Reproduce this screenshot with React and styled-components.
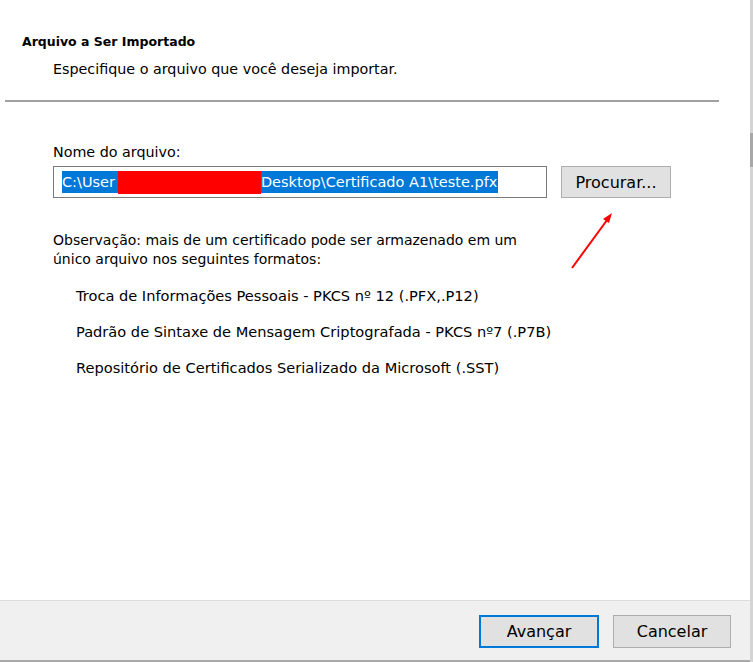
import React from 'react'
import styled, { createGlobalStyle } from 'styled-components'

const GlobalStyle = createGlobalStyle`
  html, body {
    margin: 0;
    padding: 0;
    background: #ffffff;
  }
  body {
    font-family: "DejaVu Sans", Tahoma, sans-serif;
    color: #000;
  }
`

const Window = styled.div`
  display: flex;
  width: 753px;
  height: 662px;
  overflow: hidden;
`

const Main = styled.div`
  flex: 1;
  display: flex;
  flex-direction: column;
  border-bottom: 2px solid #a9a9a9;
`

const ScrollStrip = styled.div`
  width: 3px;
  display: flex;
  flex-direction: column;
  background: #d4d4d4;
  padding-top: 133px;
`

const ScrollThumb = styled.div`
  height: 34px;
  background: #a8a8a8;
`

const Header = styled.div`
  padding: 34px 0 0 17px;
  margin: 0 31px 0 5px;
  height: 66px;
  border-bottom: 2px solid #a0a0a0;
`

const Title = styled.div`
  font-size: 12.5px;
  font-weight: bold;
  line-height: 16px;
`

const Subtitle = styled.div`
  font-size: 14.3px;
  line-height: 17px;
  margin-top: 11px;
  padding-left: 31px;
`

const Content = styled.div`
  flex: 1;
  padding: 42px 0 0 53px;
  font-size: 14px;
  line-height: 19px;
`

const Label = styled.div`
  line-height: 17px;
  font-size: 14.3px;
`

const FileRow = styled.div`
  display: flex;
  align-items: center;
  gap: 14px;
  margin-top: 5px;
`

const FileInput = styled.div`
  width: 484px;
  height: 30px;
  border: 1px solid #7a7a7a;
  display: flex;
  align-items: center;
  padding-left: 8px;
  overflow: hidden;
  white-space: nowrap;
`

const Selection = styled.span`
  display: flex;
  align-items: center;
  background: #0078d7;
  color: #ffffff;
  height: 22px;
  padding-right: 1px;
  font-size: 14.5px;
`

const Redaction = styled.span`
  display: inline-block;
  width: 143px;
  height: 23px;
  margin: 1px 0 0 3px;
  background: #ff0000;
`

const Button = styled.div`
  width: ${p => p.w}px;
  height: ${p => p.h}px;
  box-sizing: border-box;
  background: #e1e1e1;
  border: ${p => (p.primary ? '2px solid #0078d7' : '1px solid #adadad')};
  display: flex;
  align-items: center;
  justify-content: center;
  font-size: 16px;
  color: #000;
`

const Note = styled.div`
  margin-top: 33px;
  width: 476px;
`

const Formats = styled.div`
  display: flex;
  flex-direction: column;
  gap: 17px;
  margin-top: 17px;
  padding-left: 23px;
  font-size: 14.6px;
`

const Footer = styled.div`
  height: 60px;
  background: #f0f0f0;
  border-top: 1px solid #dcdcdc;
  display: flex;
  justify-content: flex-end;
  align-items: flex-start;
  gap: 14px;
  padding: 14px 19px 0 0;
  box-sizing: border-box;
`

const Arrow = styled.svg`
  position: absolute;
  left: 566px;
  top: 208px;
`

export default function App() {
  return (
    <>
      <GlobalStyle />
      <Window>
        <Main>
          <Header>
            <Title>Arquivo a Ser Importado</Title>
            <Subtitle>Especifique o arquivo que você deseja importar.</Subtitle>
          </Header>
          <Content>
            <Label>Nome do arquivo:</Label>
            <FileRow>
              <FileInput>
                <Selection>
                  C:\User
                  <Redaction />
                  Desktop\Certificado A1\teste.pfx
                </Selection>
              </FileInput>
              <Button w={110} h={32}>Procurar...</Button>
            </FileRow>
            <Note>
              Observação: mais de um certificado pode ser armazenado em um único arquivo nos seguintes formatos:
            </Note>
            <Formats>
              <div>Troca de Informações Pessoais - PKCS nº 12 (.PFX,.P12)</div>
              <div>Padrão de Sintaxe de Mensagem Criptografada - PKCS nº7 (.P7B)</div>
              <div>Repositório de Certificados Serializado da Microsoft (.SST)</div>
            </Formats>
          </Content>
          <Footer>
            <Button primary w={120} h={33}>Avançar</Button>
            <Button w={118} h={33}>Cancelar</Button>
          </Footer>
        </Main>
        <ScrollStrip>
          <ScrollThumb />
        </ScrollStrip>
      </Window>
      <Arrow width="52" height="64" viewBox="0 0 52 64">
        <path d="M6 60 L44 8" stroke="#ff0000" strokeWidth="2" fill="none" />
        <path d="M46 5 L37 11 L43 15 Z" fill="#ff0000" />
      </Arrow>
    </>
  )
}
